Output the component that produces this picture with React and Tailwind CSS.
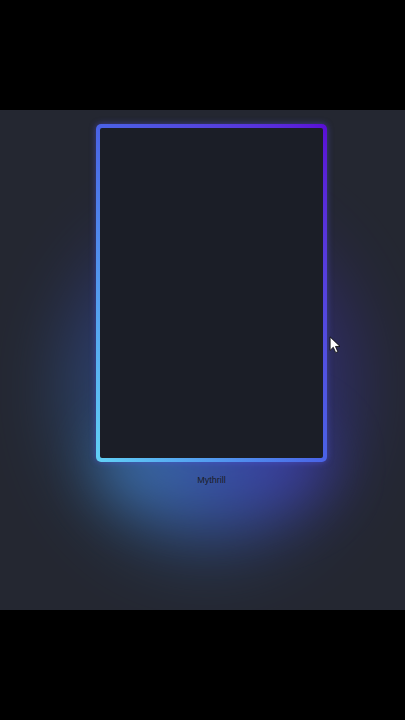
export default function App() {
  return (
    <div className="flex h-[720px] w-[405px] flex-col bg-black" style={{ fontFamily: '"Liberation Sans", Arial, sans-serif' }}>
      <div className="h-[110px] bg-black" />

      <main className="relative h-[500px] overflow-hidden bg-[#242731]">
        {/* glow behind the card */}
        <div className="pointer-events-none absolute left-[68px] top-[110px] h-[330px] w-[285px] rounded-[50%] bg-gradient-to-tr from-[#3a9fd0] via-[#3848c0] to-[#4a1fb8] opacity-45 blur-[40px]" />
        <div className="pointer-events-none absolute left-[100px] top-[300px] h-[110px] w-[230px] rounded-[50%] bg-gradient-to-r from-[#4a9fd6] via-[#4060d0] to-[#4a38c8] opacity-50 blur-[28px]" />

        <div className="relative ml-[96px] mt-[14px] w-[231px]">
          <div className="h-[338px] rounded-[5px] bg-gradient-to-tr from-[#62d2f6] via-[#4a62e6] to-[#5a0ad6] p-[4px] shadow-[0_0_6px_rgba(90,90,240,0.5)]">
            <div className="h-full w-full rounded-[2px] bg-[#1b1e27]" />
          </div>
          <p className="mt-[12px] text-center text-[9px] text-[#1a1d27]">Mythrill</p>
        </div>

        {/* mouse pointer */}
        <svg className="absolute left-[329px] top-[226px]" width="13" height="18" viewBox="0 0 14 20">
          <path d="M1 1 L1 16 L4.5 12.5 L7.2 18.5 L9.6 17.4 L7 11.6 L12 11.6 Z" fill="#ffffff" stroke="#111" strokeWidth="1" strokeLinejoin="round" />
        </svg>
      </main>

      <div className="flex-1 bg-black" />
    </div>
  );
}
